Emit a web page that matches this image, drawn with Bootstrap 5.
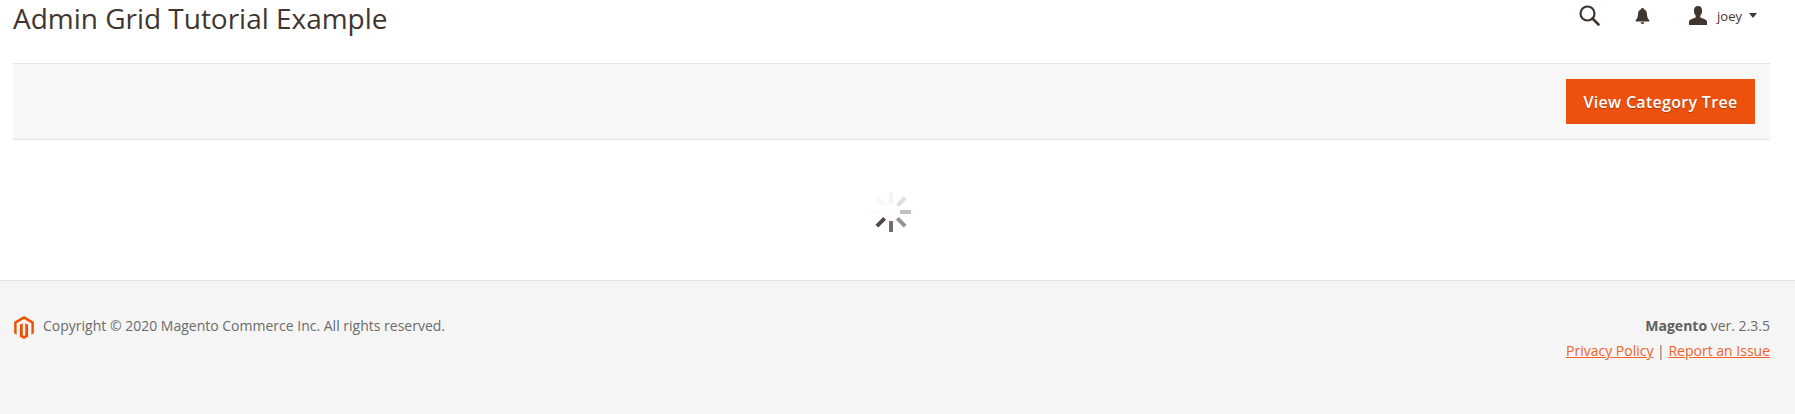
<!DOCTYPE html>
<html lang="en">
<head>
  <meta charset="UTF-8">
  <meta name="viewport" content="width=device-width, initial-scale=1.0">
  <title>Admin Grid Tutorial Example</title>
  <link rel="stylesheet" href="https://cdn.jsdelivr.net/npm/bootstrap@5.3.2/dist/css/bootstrap.min.css">
  <style>
    html, body { height: 100%; }
    body { font-family: "Open Sans", sans-serif; color: #41362f; background: #fff; overflow: hidden; }
    .page-top { height: 63px; padding: 0 38px 0 13px; }
    .page-name { font-size: 28px; font-weight: 400; line-height: 37px; margin: 0; color: #41362f; letter-spacing: -.02px; }
    .top-actions { height: 31px; }
    .search-ico { margin-right: 35px; }
    .bell-ico { margin-right: 38px; }
    .user-name { font-size: 13px; margin: 0 7px 0 9px; line-height: 16px; }
    .user-caret { width: 0; height: 0; border-left: 4.5px solid transparent; border-right: 4.5px solid transparent; border-top: 5px solid #41362f; }
    .tool-strip { margin: 0 25px 0 13px; height: 77px; background: #f8f8f8; border-top: 1px solid #e3e3e3; border-bottom: 1px solid #e3e3e3; padding-right: 15px; }
    .tree-btn { background: #ec520e; color: #fff; border: 0; border-radius: 0; font-size: 16px; font-weight: 600; letter-spacing: .3px; width: 189px; height: 45px; padding: 0; text-shadow: 0 1px 1px rgba(0,0,0,.3); }
    .tree-btn:hover { background: #ba4000; color: #fff; }
    .load-area { height: 140px; padding: 4px 14px 0 0; }
    .page-foot { background: #f5f5f5; border-top: 1px solid #e3e3e3; height: 134px; padding: 35px 25px 0 14px; font-size: 14px; color: #6b6b6b; }
    .page-foot a { color: #f0622a; }
    .foot-line { line-height: 20px; }
    .foot-links { margin-top: 5px; line-height: 20px; }
    .foot-logo { margin-right: 9px; }
    .version-word { font-weight: 700; color: #5f5f5f; }
  </style>
</head>
<body>
  <header class="page-top d-flex justify-content-between align-items-start">
    <h1 class="page-name">Admin Grid Tutorial Example</h1>
    <div class="top-actions d-flex align-items-center">
      <svg class="search-ico" width="21" height="21" viewBox="0 0 21 21" fill="none" stroke="#41362f">
        <circle cx="8.500" cy="8.500" r="7" stroke-width="2.2"/>
        <path d="M13.500 13.500l6 6" stroke-width="2.6" stroke-linecap="round"/>
      </svg>
      <svg class="bell-ico" width="15" height="18" viewBox="0 0 16 20" fill="#41362f">
        <path d="M8 1c1 0 1.500.6 1.500 1.400C12 3.200 13 5.500 13 8c0 3 .8 4.800 2.500 6.500V16H.5v-1.500C2.200 12.800 3 11 3 8c0-2.500 1-4.800 3.500-5.600C6.500 1.600 7 1 8 1z"/>
        <path d="M6 17h4c0 1.200-.9 2-2 2s-2-.8-2-2z"/>
      </svg>
      <svg width="20" height="19" viewBox="0 0 20 20" fill="#41362f">
        <path d="M10 0c2.800 0 4.300 2.100 4.300 5 0 2.200-.8 4.100-1.900 5.300v1.700c2 .9 6.600 1.800 7.100 4.200V20H.5v-3.800c.5-2.400 5.100-3.300 7.100-4.200v-1.700C6.500 9.100 5.700 7.200 5.700 5 5.700 2.100 7.200 0 10 0z"/>
      </svg>
      <span class="user-name">joey</span>
      <span class="user-caret"></span>
    </div>
  </header>

  <div class="tool-strip d-flex justify-content-end align-items-center">
    <button type="button" class="btn tree-btn">View Category Tree</button>
  </div>

  <main class="load-area d-flex justify-content-center align-items-center">
    <svg width="40" height="40" viewBox="0 0 40 40" fill="#514943">
      <rect x="18" y="0" width="4" height="11" opacity=".06"/>
      <rect x="18" y="0" width="4" height="11" opacity=".18" transform="rotate(45 20 20)"/>
      <rect x="18" y="0" width="4" height="11" opacity=".35" transform="rotate(90 20 20)"/>
      <rect x="18" y="0" width="4" height="11" opacity=".6" transform="rotate(135 20 20)"/>
      <rect x="18" y="0" width="4" height="11" opacity=".8" transform="rotate(180 20 20)"/>
      <rect x="18" y="0" width="4" height="11" opacity="1" transform="rotate(225 20 20)"/>
      <rect x="18" y="0" width="4" height="11" opacity=".02" transform="rotate(270 20 20)"/>
      <rect x="18" y="0" width="4" height="11" opacity=".04" transform="rotate(315 20 20)"/>
    </svg>
  </main>

  <footer class="page-foot d-flex justify-content-between">
    <div class="d-flex align-items-start">
      <svg class="foot-logo" width="20" height="23" viewBox="0 0 24 28" fill="#eb5202">
        <path d="M12 0L24 7v14l-3 1.700V8.700L12 3.500 3 8.700v14L0 21V7z"/>
        <path d="M13.500 8.700v14.800L12 24.300l-1.500-.8V8.700L7 10.700v14.600L12 28l5-2.700V10.700z"/>
      </svg>
      <span class="foot-line">Copyright © 2020 Magento Commerce Inc. All rights reserved.</span>
    </div>
    <div class="text-end">
      <div class="foot-line"><span class="version-word">Magento</span> ver. 2.3.5</div>
      <div class="foot-links"><a href="#">Privacy Policy</a> | <a href="#">Report an Issue</a></div>
    </div>
  </footer>
</body>
</html>
